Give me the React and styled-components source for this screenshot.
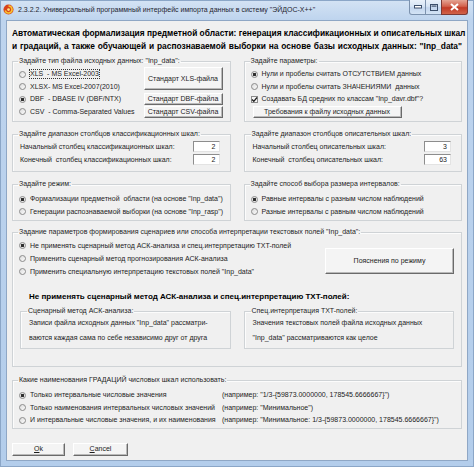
import React from 'react'
import styled, { createGlobalStyle } from 'styled-components'

const GlobalStyle = createGlobalStyle`
  html, body { margin: 0; padding: 0; background: #fff; }
  body { font-family: "Liberation Sans", Arial, sans-serif; color: #1c1c1c; }
  * { box-sizing: border-box; }
`

function Radio({ checked, children, focus }) {
  return (
    <Row>
      <RadioDot $checked={checked} />
      <Text $focus={focus}>{children}</Text>
    </Row>
  )
}

function Check({ checked, children }) {
  return (
    <Row>
      <CheckBox>
        {checked && (
          <svg width="7" height="7" viewBox="0 0 7 7">
            <polyline points="1,3.5 2.8,5.3 6,1.5" fill="none" stroke="#1d1d1d" strokeWidth="1.3" />
          </svg>
        )}
      </CheckBox>
      <Text>{children}</Text>
    </Row>
  )
}

function App() {
  return (
    <>
      <GlobalStyle />
      <Window>
        <TitleBar>
          <svg width="11" height="11" viewBox="0 0 12 12" style={{ marginTop: 4, marginLeft: 3 }}>
            <circle cx="6" cy="6" r="5.5" fill="#d9421b" />
            <path d="M6 2.2 A3.8 3.8 0 1 1 2.4 7.2" fill="none" stroke="#f7c531" strokeWidth="1.8" />
            <circle cx="6" cy="6" r="1.5" fill="#fbe38a" />
          </svg>
          <Title>2.3.2.2. Универсальный программный интерфейс импорта данных в систему "ЭЙДОС-Х++"</Title>
          <Controls>
            <CtrlButton $w={17}>
              <svg width="8" height="4" viewBox="0 0 8 4"><rect x="0.5" y="0.5" width="7" height="2.5" fill="#fff" stroke="#3c4f6b" strokeWidth="1" /></svg>
            </CtrlButton>
            <CtrlButton $w={17}>
              <svg width="8" height="7" viewBox="0 0 8 7"><rect x="0.5" y="0.5" width="7" height="6" fill="none" stroke="#3c4f6b" strokeWidth="1" /><rect x="1.5" y="1.5" width="5" height="1.2" fill="#3c4f6b" /></svg>
            </CtrlButton>
            <CtrlButton $w={27} $close>
              <svg width="9" height="8" viewBox="0 0 9 8"><path d="M1 1 L8 7 M8 1 L1 7" stroke="#fff" strokeWidth="2" /></svg>
            </CtrlButton>
          </Controls>
        </TitleBar>

        <Client>
          <Heading>
            <HeadLine>Автоматическая формализация предметной области: генерация классификационных и описательных шкал</HeadLine>
            <HeadLine>и градаций, а также обучающей и распознаваемой выборки на основе базы исходных данных: "Inp_data"</HeadLine>
          </Heading>

          <Columns $top={4}>
            <Group $pt={3} $pb={3}>
              <Legend>Задайте тип файла исходных данных: "Inp_data":</Legend>
              <Split>
                <List>
                  <Radio focus>XLS&nbsp;&nbsp;- MS Excel-2003</Radio>
                  <Radio>XLSX- MS Excel-2007(2010)</Radio>
                  <Radio checked>DBF&nbsp;&nbsp;- DBASE IV (DBF/NTX)</Radio>
                  <Radio>CSV&nbsp;&nbsp;- Comma-Separated Values</Radio>
                </List>
                <ButtonColumn>
                  <Button $w={79} $h={23}>Стандарт XLS-файла</Button>
                  <Button $w={79} $h={12} style={{ marginTop: 3 }}>Стандарт DBF-файла</Button>
                  <Button $w={79} $h={12} style={{ marginTop: 1 }}>Стандарт CSV-файла</Button>
                </ButtonColumn>
              </Split>
            </Group>
            <Group $pt={3} $pb={3}>
              <Legend>Задайте параметры:</Legend>
              <List>
                <Radio checked>Нули и пробелы считать ОТСУТСТВИЕМ данных</Radio>
                <Radio>Нули и пробелы считать ЗНАЧЕНИЯМИ&nbsp; данных</Radio>
                <Check checked>Создавать БД средних по классам "Inp_davr.dbf"?</Check>
              </List>
              <Button $w={149} $h={12} style={{ marginLeft: 1 }}>Требования к файлу исходных данных</Button>
            </Group>
          </Columns>

          <Columns $top={8}>
            <Group $pt={2} $pb={5} $pr={10}>
              <Legend>Задайте диапазон столбцов классификационных шкал:</Legend>
              <Field>
                <Text>Начальный столбец классификационных шкал:</Text>
                <NumBox>2</NumBox>
              </Field>
              <Field>
                <Text>Конечный&nbsp; столбец классификационных шкал:</Text>
                <NumBox>2</NumBox>
              </Field>
            </Group>
            <Group $pt={2} $pb={5} $pr={10} $pl={8}>
              <Legend>Задайте диапазон столбцов описательных шкал:</Legend>
              <Field>
                <Text>Начальный столбец описательных шкал:</Text>
                <NumBox>3</NumBox>
              </Field>
              <Field>
                <Text>Конечный&nbsp; столбец описательных шкал:</Text>
                <NumBox>63</NumBox>
              </Field>
            </Group>
          </Columns>

          <Columns $top={8}>
            <Group $pt={5} $pb={2}>
              <Legend>Задайте режим:</Legend>
              <Radio checked>Формализации предметной&nbsp; области (на основе "Inp_data")</Radio>
              <Radio>Генерации распознаваемой выборки (на основе "Inp_rasp")</Radio>
            </Group>
            <Group $pt={5} $pb={2}>
              <Legend>Задайте способ выбора размера интервалов:</Legend>
              <Radio checked>Равные интервалы с разным числом наблюдений</Radio>
              <Radio>Разные интервалы с равным числом наблюдений</Radio>
            </Group>
          </Columns>

          <Group $top={7} $pt={3} $pb={17}>
            <Legend>Задание параметров формирования сценариев или способа интерпретации текстовых полей "Inp_data":</Legend>
            <Split>
              <List $row={13}>
                <Radio checked>Не применять сценарный метод АСК-анализа и спец.интерпретацию TXT-полей</Radio>
                <Radio>Применить сценарный метод прогнозирования АСК-анализа</Radio>
                <Radio>Применить специальную интерпретацию текстовых полей "Inp_data"</Radio>
              </List>
              <Button $w={129} $h={26} style={{ marginTop: 9 }}>Пояснения по режиму</Button>
            </Split>
            <SubHeading>Не применять сценарный метод АСК-анализа и спец.интерпретацию TXT-полей:</SubHeading>
            <Columns $top={4}>
              <Group $pt={0} $pb={3} $pl={8}>
                <Legend>Сценарный метод АСК-анализа:</Legend>
                <Note>Записи файла исходных данных "Inp_data" рассматри-</Note>
                <Note>ваются каждая сама по себе независимо друг от друга</Note>
              </Group>
              <Group $pt={0} $pb={3} $pl={8}>
                <Legend>Спец.интерпретация TXT-полей:</Legend>
                <Note>Значения текстовых полей файла исходных данных</Note>
                <Note>"Inp_data" рассматриваются как целое</Note>
              </Group>
            </Columns>
          </Group>

          <Group $top={9} $pt={5} $pb={1}>
            <Legend>Какие наименования ГРАДАЦИЙ числовых шкал использовать:</Legend>
            <GradeRow>
              <Radio checked>Только интервальные числовые значения</Radio>
              <Text>(например: "1/3-{'{'}59873.0000000, 178545.6666667{'}'}")</Text>
            </GradeRow>
            <GradeRow>
              <Radio>Только наименования интервальных числовых значений</Radio>
              <Text>(например: "Минимальное")</Text>
            </GradeRow>
            <GradeRow>
              <Radio>И интервальные числовые значения, и их наименования</Radio>
              <Text>(например: "Минимальное: 1/3-{'{'}59873.0000000, 178545.6666667{'}'}")</Text>
            </GradeRow>
          </Group>

          <Footer>
            <Button $w={53} $h={13}><u>O</u>k</Button>
            <Button $w={55} $h={13}><u>C</u>ancel</Button>
          </Footer>
        </Client>
      </Window>
    </>
  )
}

export default App

const Window = styled.div`
  width: 474px;
  height: 467px;
  display: flex;
  flex-direction: column;
  background: linear-gradient(180deg, #d4e3f4 0px, #bed4ee 20px, #b3cdeb 100%);
  box-shadow: inset 0 0 0 1px #8ba6c7;
`

const TitleBar = styled.div`
  height: 20px;
  display: flex;
  align-items: flex-start;
  flex-shrink: 0;
`

const Title = styled.div`
  margin: 6px 0 0 4px;
  font-size: 7px;
  line-height: 8px;
  color: #1e2530;
  white-space: nowrap;
`

const Controls = styled.div`
  margin-left: auto;
  margin-right: 6px;
  display: flex;
`

const CtrlButton = styled.div`
  width: ${p => p.$w}px;
  height: 15px;
  display: flex;
  align-items: center;
  justify-content: center;
  border: 1px solid ${p => (p.$close ? '#7d3a35' : '#7c92ae')};
  border-top: none;
  margin-left: -1px;
  border-radius: ${p => (p.$close ? '0 0 3px 0' : '0')};
  background: ${p =>
    p.$close
      ? 'linear-gradient(180deg, #e4a493 0%, #d3624d 45%, #c23a26 55%, #d1634a 100%)'
      : 'linear-gradient(180deg, #e9f1fa 0%, #d6e4f4 45%, #c3d6ee 55%, #d3e3f5 100%)'};
  &:first-child { border-radius: 0 0 0 3px; }
`

const Client = styled.div`
  flex: 1;
  margin: 0 6px 6px;
  background: #f0f0f0;
  border: 1px solid #8fa7c5;
  padding: 6px 5px 0 5px;
  display: flex;
  flex-direction: column;
  font-size: 7px;
`

const Heading = styled.div`
  font-weight: bold;
  font-size: 8.4px;
  line-height: 13px;
  color: #000;
`

const HeadLine = styled.div`
  text-align: justify;
  text-align-last: justify;
  white-space: nowrap;
`

const Columns = styled.div`
  display: grid;
  grid-template-columns: 1fr 1fr;
  column-gap: 13px;
  margin-top: ${p => p.$top || 0}px;
`

const Group = styled.fieldset`
  margin: ${p => p.$top || 0}px 0 0;
  min-width: 0;
  font-size: 7px;
  line-height: 8px;
  border: 1px solid #cfd3d6;
  box-shadow: inset 1px 1px 0 #fcfcfc;
  padding: ${p => p.$pt}px ${p => p.$pr ?? 7}px ${p => p.$pb}px ${p => p.$pl ?? 7}px;
`

const Legend = styled.legend`
  font-size: 7px;
  line-height: 8px;
  padding: 0 1px;
  margin-left: -2px;
  white-space: nowrap;
`

const Split = styled.div`
  display: flex;
  justify-content: space-between;
  align-items: flex-start;
`

const List = styled.div`
  display: flex;
  flex-direction: column;
  & > div { height: ${p => p.$row || 12.5}px; }
`

const ButtonColumn = styled.div`
  display: flex;
  flex-direction: column;
  margin-top: -1px;
`

const Row = styled.div`
  display: flex;
  align-items: center;
  height: 12.5px;
  white-space: nowrap;
`

const RadioDot = styled.span`
  width: 7px;
  height: 7px;
  margin-left: -1px;
  margin-right: 4px;
  flex-shrink: 0;
  border-radius: 50%;
  border: 1px solid #8b8b8b;
  background: ${p =>
    p.$checked
      ? 'radial-gradient(circle, #2e2e2e 0 1.4px, #e6e6e6 1.8px)'
      : 'linear-gradient(135deg, #dcdcdc, #fbfbfb)'};
`

const CheckBox = styled.span`
  width: 7px;
  height: 7px;
  margin-left: -1px;
  margin-right: 4px;
  flex-shrink: 0;
  border: 1px solid #8b8b8b;
  background: #f6f6f6;
  display: flex;
  align-items: center;
  justify-content: center;
  & svg { margin: -1px; }
`

const Text = styled.span`
  font-size: 7px;
  line-height: 8px;
  white-space: nowrap;
  outline: ${p => (p.$focus ? '1px dotted #333' : 'none')};
`

const Button = styled.button`
  display: block;
  width: ${p => p.$w}px;
  height: ${p => p.$h}px;
  margin: 0;
  padding: 0;
  font-family: "Liberation Sans", Arial, sans-serif;
  font-size: 7px;
  line-height: 8px;
  color: #1c1c1c;
  background: #f4f4f4;
  border: 1px solid;
  border-color: #ffffff #6a6a6a #6a6a6a #ffffff;
  box-shadow: inset -1px -1px 0 #b9b9b9;
  white-space: nowrap;
  flex-shrink: 0;
`

const Field = styled.div`
  display: flex;
  align-items: center;
  justify-content: space-between;
  height: 13px;
`

const NumBox = styled.div`
  width: 27px;
  height: 11px;
  background: #fff;
  border: 1px solid;
  border-color: #8d8d8d #e3e3e3 #e3e3e3 #8d8d8d;
  font-size: 7px;
  line-height: 9px;
  text-align: right;
  padding-right: 3px;
`

const SubHeading = styled.div`
  margin: 13px 0 0 9px;
  font-weight: bold;
  font-size: 8px;
  line-height: 12px;
  color: #000;
  white-space: nowrap;
`

const Note = styled.div`
  font-size: 7px;
  line-height: 15px;
  white-space: nowrap;
`

const GradeRow = styled.div`
  display: grid;
  grid-template-columns: 202px 1fr;
  align-items: center;
  height: 12.5px;
`

const Footer = styled.div`
  display: flex;
  gap: 8px;
  margin-top: 14px;
`
